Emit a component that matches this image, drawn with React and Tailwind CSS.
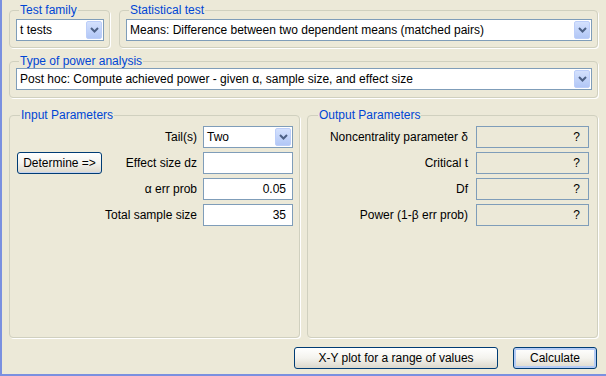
import React from 'react'

function Chevron() {
  return (
    <svg width="9" height="6" viewBox="0 0 9 6">
      <path d="M1 1 L4.5 4.5 L8 1" fill="none" stroke="#4d6185" strokeWidth="2" />
    </svg>
  )
}

function Select({ value, className = '' }) {
  return (
    <div className={`flex h-[22px] items-center border border-[#7f9db9] bg-white ${className}`}>
      <span className="flex-1 truncate pl-[3px] text-black">{value}</span>
      <span className="mr-px flex h-[18px] w-[16px] items-center justify-center rounded-[2px] border border-[#bccef9] bg-gradient-to-b from-[#d4e1fd] to-[#b2c7f6]">
        <Chevron />
      </span>
    </div>
  )
}

function Group({ title, className = '', children }) {
  return (
    <fieldset className={`min-w-0 rounded-[4px] border border-[#d0d0bf] shadow-[1px_1px_0_#fff] ${className}`}>
      <legend className="ml-[3px] px-[1px] leading-[14px] text-[#0046d5]">{title}</legend>
      {children}
    </fieldset>
  )
}

function XpButton({ children, className = '', isDefault = false }) {
  return (
    <button
      className={`flex h-[22px] items-center justify-center rounded-[3px] border border-[#003c74] bg-gradient-to-b from-white via-[#f4f3ee] to-[#dcd8cc] text-black ${isDefault ? 'shadow-[inset_0_0_0_2px_#b4cbf5]' : ''} ${className}`}
    >
      {children}
    </button>
  )
}

const inputRows = [
  { label: 'Effect size dz', value: '' },
  { label: 'α err prob', value: '0.05' },
  { label: 'Total sample size', value: '35' },
]

const outputRows = ['Noncentrality parameter δ', 'Critical t', 'Df', 'Power (1-β err prob)']

export default function App() {
  return (
    <div className="flex h-[376px] w-[606px] flex-col overflow-hidden border-b-2 border-l-2 border-[#7a90e0] bg-[#ece9d8] pl-[7px] pr-[8px] pt-[3px] font-['Liberation_Sans',Arial,sans-serif] text-[12px] text-black">
      {/* test family + statistical test */}
      <div className="flex gap-[9px]">
        <Group title="Test family" className="w-[101px] pb-[6px] pl-[6px] pr-[5px]">
          <Select value="t tests" className="mt-[2px]" />
        </Group>
        <Group title="Statistical test" className="flex-1 pb-[6px] pl-[6px] pr-[5px]">
          <Select value="Means: Difference between two dependent means (matched pairs)" className="mt-[2px]" />
        </Group>
      </div>

      <Group title="Type of power analysis" className="mt-[6px] pb-[7px] pl-[6px] pr-[5px]">
        <Select value="Post hoc: Compute achieved power - given α, sample size, and effect size" />
      </Group>

      <div className="mt-[10px] flex gap-[7px]">
        <Group title="Input Parameters" className="h-[230px] w-[291px] pl-[7px] pr-[6px]">
          <div className="mt-[4px] flex flex-col gap-[4px]">
            <div className="flex h-[22px] items-center gap-[6px]">
              <div className="w-[85px] min-w-0" />
              <span className="flex-1 whitespace-nowrap text-right">Tail(s)</span>
              <Select value="Two" className="w-[90px] shrink-0" />
            </div>
            {inputRows.map((row, i) => (
              <div key={row.label} className="flex h-[22px] items-center gap-[6px]">
                <div className="w-[85px] min-w-0">
                  {i === 0 && (
                    <XpButton className="h-[21px] w-[85px] shadow-[inset_0_-1px_0_#c5d3f0]">Determine =&gt;</XpButton>
                  )}
                </div>
                <span className="flex-1 whitespace-nowrap text-right">{row.label}</span>
                <div className="flex h-[22px] w-[90px] shrink-0 items-center justify-end border border-[#7f9db9] bg-white pr-[6px]">
                  {row.value}
                </div>
              </div>
            ))}
          </div>
        </Group>

        <Group title="Output Parameters" className="h-[230px] w-[291px] pl-[7px] pr-[8px]">
          <div className="mt-[4px] flex flex-col gap-[4px]">
            {outputRows.map((label) => (
              <div key={label} className="flex h-[22px] items-center gap-[8px]">
                <span className="flex-1 whitespace-nowrap text-right">{label}</span>
                <div className="flex h-[22px] w-[113px] shrink-0 items-center justify-end border border-[#7f9db9] bg-[#ece9d8] pr-[8px]">
                  ?
                </div>
              </div>
            ))}
          </div>
        </Group>
      </div>

      <div className="mt-[9px] flex justify-end gap-[15px] pr-[1px]">
        <XpButton className="w-[204px]">X-Y plot for a range of values</XpButton>
        <XpButton className="w-[84px]" isDefault>Calculate</XpButton>
      </div>
    </div>
  )
}
